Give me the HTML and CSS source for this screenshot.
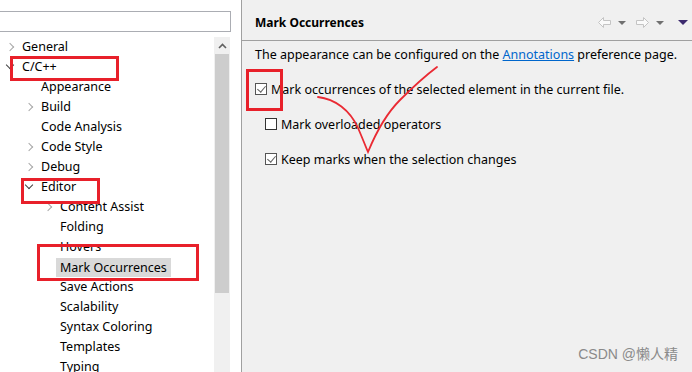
FILE: index.html
```html
<!DOCTYPE html>
<html lang="en">
<head>
    <meta charset="UTF-8">
    <title>Preferences - Mark Occurrences</title>
    <link rel="stylesheet" href="styles.css">
</head>
<body>
    <div class="sidebar">
        <input class="filter" type="text">
        <div class="tree-area">
            <ul class="tree">
                <li class="lvl0"><span class="twisty closed"></span>General</li>
                <li class="lvl0"><span class="twisty open"></span>C/C++</li>
                <li class="lvl1"><span class="twisty"></span>Appearance</li>
                <li class="lvl1"><span class="twisty closed"></span>Build</li>
                <li class="lvl1"><span class="twisty"></span>Code Analysis</li>
                <li class="lvl1"><span class="twisty closed"></span>Code Style</li>
                <li class="lvl1"><span class="twisty closed"></span>Debug</li>
                <li class="lvl1"><span class="twisty open"></span>Editor</li>
                <li class="lvl2"><span class="twisty closed"></span>Content Assist</li>
                <li class="lvl2"><span class="twisty"></span>Folding</li>
                <li class="lvl2"><span class="twisty"></span>Hovers</li>
                <li class="lvl2"><span class="twisty"></span><span class="selected">Mark Occurrences</span></li>
                <li class="lvl2"><span class="twisty"></span>Save Actions</li>
                <li class="lvl2"><span class="twisty"></span>Scalability</li>
                <li class="lvl2"><span class="twisty"></span>Syntax Coloring</li>
                <li class="lvl2"><span class="twisty"></span>Templates</li>
                <li class="lvl2"><span class="twisty"></span>Typing</li>
            </ul>
            <div class="scrollbar">
                <div class="scroll-up">
                    <svg width="9" height="6" viewBox="0 0 9 6"><path d="M1 5 L4.5 1.5 L8 5" fill="none" stroke="#606060" stroke-width="1.6"/></svg>
                </div>
                <div class="scroll-thumb"></div>
            </div>
        </div>
    </div>

    <div class="page">
        <div class="page-header">
            <h2>Mark Occurrences</h2>
            <div class="nav">
                <svg class="nav-arrow" width="13" height="11" viewBox="0 0 13 11"><path d="M0.5 5.5 L5.5 0.5 V3.5 H12.5 V7.5 H5.5 V10.5 Z" fill="#fafafa" stroke="#c4c4c4"/></svg>
                <span class="drop"></span>
                <svg class="nav-arrow" width="13" height="11" viewBox="0 0 13 11"><path d="M12.5 5.5 L7.5 0.5 V3.5 H0.5 V7.5 H7.5 V10.5 Z" fill="#fafafa" stroke="#c4c4c4"/></svg>
                <span class="drop"></span>
                <span class="drop menu"></span>
            </div>
        </div>
        <div class="page-body">
            <p class="intro">The appearance can be configured on the <a href="#">Annotations</a> preference page.</p>
            <label class="check"><span class="box on"></span>Mark occurrences of the selected element in the current file.</label>
            <label class="check sub"><span class="box"></span>Mark overloaded operators</label>
            <label class="check sub"><span class="box on"></span>Keep marks when the selection changes</label>
        </div>
        <div class="watermark">CSDN @懒人精</div>
    </div>

    <svg class="marks" width="692" height="372" viewBox="0 0 692 372">
        <g fill="none" stroke="#e8202a" stroke-width="3">
            <rect x="11.5" y="57.5" width="106" height="22"/>
            <rect x="22.5" y="179.5" width="76" height="23"/>
            <rect x="38.5" y="245.5" width="159" height="34"/>
            <rect x="247.5" y="70.5" width="34" height="39"/>
        </g>
        <path d="M318 97 C335 99 350 110 358 128 C362 137 365 145 368 152 C375 135 385 115 400 100 C412 88 425 76 437 67" fill="none" stroke="#ea2a33" stroke-width="1.8" stroke-linecap="round"/>
    </svg>
</body>
</html>
```

FILE: styles.css
```css
* {
    margin: 0;
    padding: 0;
    box-sizing: border-box;
}

body {
    width: 692px;
    height: 372px;
    overflow: hidden;
    display: flex;
    position: relative;
    background: #f0f0f0;
    font-family: 'Noto Sans', 'Noto Sans CJK SC', sans-serif;
    font-size: 12.5px;
    color: #000000;
}

/* Left tree panel */
.sidebar {
    width: 242px;
    background: #ffffff;
    border-right: 1px solid #a0a0a0;
    padding-top: 11px;
    flex-shrink: 0;
}

.filter {
    display: block;
    width: 232px;
    height: 21px;
    margin-left: -1px;
    border: 1px solid #abadb3;
    background: #ffffff;
}

.tree-area {
    display: flex;
    margin-top: 5px;
    height: 340px;
}

.tree {
    list-style: none;
    flex: 1;
    overflow: hidden;
}

.tree li {
    height: 20px;
    line-height: 20px;
    display: flex;
    align-items: center;
    white-space: nowrap;
}

.lvl0 { padding-left: 4px; }
.lvl1 { padding-left: 23px; }
.lvl2 { padding-left: 42px; }

.twisty {
    width: 18px;
    height: 20px;
    position: relative;
    flex-shrink: 0;
}

.twisty.closed::before {
    content: '';
    position: absolute;
    left: 3px;
    top: 7px;
    width: 5px;
    height: 5px;
    border-right: 1.5px solid #a8a8a8;
    border-bottom: 1.5px solid #a8a8a8;
    transform: rotate(-45deg);
}

.twisty.open::before {
    content: '';
    position: absolute;
    left: 3px;
    top: 5px;
    width: 5px;
    height: 5px;
    border-right: 1.5px solid #404040;
    border-bottom: 1.5px solid #404040;
    transform: rotate(45deg);
}

.selected {
    background: #d9d9d9;
    margin-left: -4px;
    padding: 0 4px;
    line-height: 19px;
}

.scrollbar {
    width: 16px;
    margin-right: 11px;
    background: #f0f0f0;
    display: flex;
    flex-direction: column;
}

.scroll-up {
    height: 17px;
    display: flex;
    align-items: center;
    justify-content: center;
}

.scroll-thumb {
    height: 239px;
    margin: 0 1px;
    background: #cdcdcd;
}

/* Right preference page */
.page {
    flex: 1;
    display: flex;
    flex-direction: column;
}

.page-header {
    height: 41px;
    border-bottom: 1px solid #a0a0a0;
    display: flex;
    align-items: center;
    justify-content: space-between;
    padding: 4px 4px 0 13px;
}

.page-header h2 {
    font-size: 12px;
    font-weight: bold;
}

.nav {
    display: flex;
    align-items: center;
    padding-top: 1px;
}

.drop {
    width: 0;
    height: 0;
    border-left: 4px solid transparent;
    border-right: 4px solid transparent;
    border-top: 4px solid #707070;
    margin: 0 10px 0 7px;
}

.drop.menu {
    border-left-width: 5px;
    border-right-width: 5px;
    border-top: 5px solid #3c2a6e;
    margin: 0 0 0 4px;
}

.page-body {
    padding: 6px 13px;
}

.intro {
    line-height: 16px;
    margin-bottom: 18px;
}

.intro a {
    color: #0066cc;
}

.check {
    display: flex;
    align-items: center;
    height: 16px;
    margin-bottom: 19px;
}

.check.sub {
    padding-left: 10px;
}

.box {
    width: 12px;
    height: 12px;
    border: 1px solid #333333;
    background: #ffffff;
    margin-right: 4px;
    position: relative;
}

.box.on {
    border-color: #555555;
}

.box.on::after {
    content: '';
    position: absolute;
    left: 3px;
    top: 0px;
    width: 4px;
    height: 7px;
    border-right: 1.3px solid #606060;
    border-bottom: 1.3px solid #606060;
    transform: rotate(40deg);
}

.watermark {
    align-self: flex-end;
    margin: auto 14px 9px 0;
    color: #8a8a8a;
    font-family: 'Liberation Sans', 'Noto Sans CJK SC', sans-serif;
    font-size: 14px;
}

/* Hand-drawn annotations on top */
.marks {
    position: absolute;
    left: 0;
    top: 0;
    pointer-events: none;
}
```
